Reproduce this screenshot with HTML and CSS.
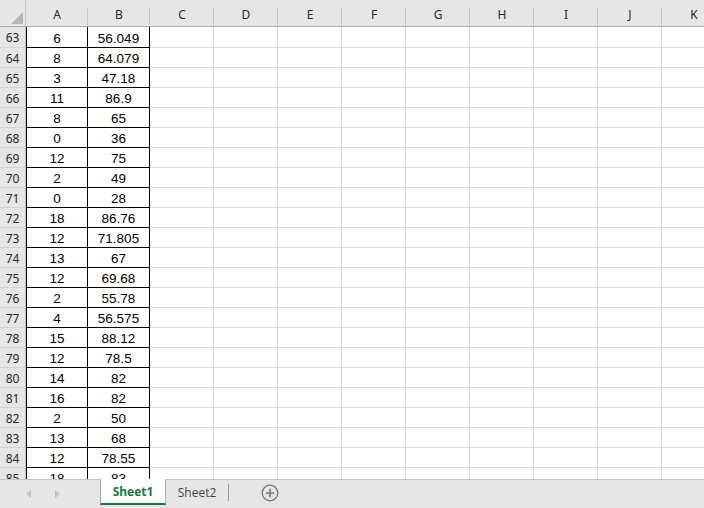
FILE: index.html
```html
<!DOCTYPE html>
<html lang="en">
<head>
    <meta charset="UTF-8">
    <title>Book1 - Excel</title>
    <link rel="stylesheet" href="styles.css">
</head>
<body>
    <div class="sheet">
        <div class="grid" id="grid">
            <div class="corner">
                <svg width="26" height="27" viewBox="0 0 26 27"><polygon points="23,12 23,24 11,24" fill="#b7b7b7"/></svg>
            </div>
        </div>
    </div>

    <div class="tabbar">
        <div class="nav">
            <span class="arrow left"></span>
            <span class="arrow right"></span>
        </div>
        <div class="tab active">Sheet1</div>
        <div class="tab">Sheet2</div>
        <div class="tab-sep"></div>
        <div class="add-sheet">
            <svg width="18" height="18" viewBox="0 0 18 18">
                <circle cx="9" cy="9" r="7.8" fill="none" stroke="#7a7a7a" stroke-width="1.3"/>
                <path d="M9 4.8v8.4M4.8 9h8.4" stroke="#7a7a7a" stroke-width="1.6"/>
            </svg>
        </div>
    </div>

    <script>
        const columns = ['A', 'B', 'C', 'D', 'E', 'F', 'G', 'H', 'I', 'J', 'K'];
        const rows = [
            [63, 6, '56.049'], [64, 8, '64.079'], [65, 3, '47.18'], [66, 11, '86.9'],
            [67, 8, '65'], [68, 0, '36'], [69, 12, '75'], [70, 2, '49'],
            [71, 0, '28'], [72, 18, '86.76'], [73, 12, '71.805'], [74, 13, '67'],
            [75, 12, '69.68'], [76, 2, '55.78'], [77, 4, '56.575'], [78, 15, '88.12'],
            [79, 12, '78.5'], [80, 14, '82'], [81, 16, '82'], [82, 2, '50'],
            [83, 13, '68'], [84, 12, '78.55'], [85, 18, '83']
        ];

        const grid = document.getElementById('grid');
        let html = '';

        columns.forEach(col => {
            html += `<div class="col-head">${col}</div>`;
        });

        rows.forEach(row => {
            html += `<div class="row-head">${row[0]}</div>`;
            html += `<div class="cell data first">${row[1]}</div>`;
            html += `<div class="cell data">${row[2]}</div>`;
            for (let i = 2; i < columns.length; i++) {
                html += `<div class="cell"></div>`;
            }
        });

        grid.innerHTML += html;
    </script>
</body>
</html>
```

FILE: styles.css
```css
* {
    box-sizing: border-box;
}

body {
    margin: 0;
    width: 704px;
    height: 508px;
    overflow: hidden;
    background: #fff;
    font-family: "Liberation Sans", Arial, sans-serif;
}

.sheet {
    height: 479px;
    overflow: hidden;
}

.grid {
    display: grid;
    grid-template-columns: 26px 62px 62px repeat(9, 64px);
    grid-template-rows: 27px 21px;
    grid-auto-rows: 20px;
}

.corner {
    background: #e6e6e6;
    border-right: 1px solid #c6c6c6;
    border-bottom: 1px solid #ababab;
}

.corner svg {
    display: block;
}

.col-head {
    display: flex;
    align-items: center;
    justify-content: center;
    padding-top: 2px;
    background: linear-gradient(#c9c9c9, #c9c9c9) right 8px / 1px 19px no-repeat, #e6e6e6;
    border-bottom: 1px solid #ababab;
    font-family: "Noto Sans", "Open Sans", sans-serif;
    font-size: 12px;
    color: #262626;
}

.row-head {
    display: flex;
    align-items: center;
    justify-content: center;
    padding-top: 1px;
    background: #e6e6e6;
    border-right: 1px solid #c6c6c6;
    border-bottom: 1px solid #d4d4d4;
    font-family: "Noto Sans", "Open Sans", sans-serif;
    font-size: 12px;
    color: #262626;
}

.cell {
    border-right: 1px solid #d9d9d9;
    border-bottom: 1px solid #d9d9d9;
}

.cell.data {
    display: flex;
    align-items: flex-end;
    justify-content: center;
    padding-bottom: 1px;
    border-right: 1px solid #000;
    border-bottom: 1px solid #000;
    font-size: 13.5px;
    color: #000;
}

.cell.data.first {
    border-left: 1px solid #000;
}

.tabbar {
    display: flex;
    align-items: stretch;
    height: 29px;
    background: #e6e6e6;
    border-top: 1px solid #c6c6c6;
    font-family: "Open Sans", "Noto Sans", sans-serif;
    font-size: 12px;
}

.nav {
    display: flex;
    align-items: center;
    gap: 24px;
    width: 100px;
    padding-left: 26px;
}

.arrow {
    width: 0;
    height: 0;
    border-top: 4px solid transparent;
    border-bottom: 4px solid transparent;
}

.arrow.left {
    border-right: 5px solid #c2c2c2;
}

.arrow.right {
    border-left: 5px solid #c2c2c2;
}

.tab {
    display: flex;
    align-items: center;
    justify-content: center;
    padding-bottom: 4px;
    color: #444;
}

.tab.active {
    width: 66px;
    margin-top: -1px;
    background: #fff;
    border-left: 1px solid #ababab;
    border-right: 1px solid #ababab;
    border-bottom: 2px solid #217346;
    margin-bottom: 3px;
    padding-bottom: 0;
    color: #217346;
    font-weight: bold;
}

.tab:not(.active) {
    width: 62px;
}

.tab-sep {
    width: 1px;
    margin: 4px 0 7px;
    background: #9a9a9a;
}

.add-sheet {
    display: flex;
    align-items: center;
    padding: 0 0 3px 32px;
}

.add-sheet svg {
    display: block;
}
```
